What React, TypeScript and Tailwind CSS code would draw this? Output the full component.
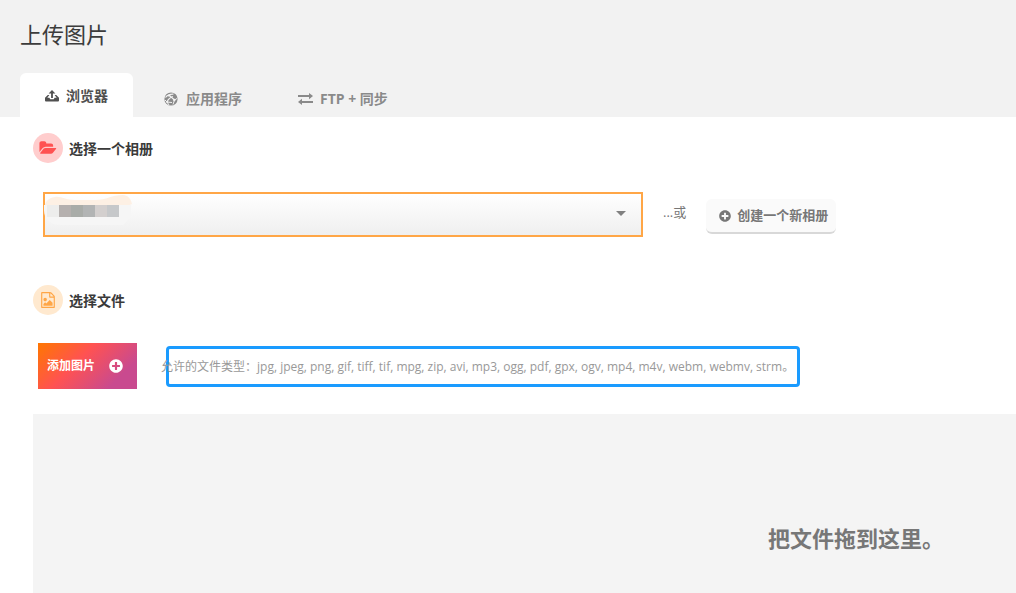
import type { ReactNode } from 'react';
import { FaPlusCircle } from 'react-icons/fa';

const fileTypes = [
    'jpg', 'jpeg', 'png', 'gif', 'tiff', 'tif', 'mpg', 'zip', 'avi', 'mp3',
    'ogg', 'pdf', 'gpx', 'ogv', 'mp4', 'm4v', 'webm', 'webmv', 'strm',
];

// blocks that hide the album name
const mosaic = [
    'bg-[#ededec]',
    'bg-[#b5b0ae]',
    'bg-[#a9aca8]',
    'bg-[#b2b4b4]',
    'bg-[#d3cfce]',
    'bg-[#c6c8ca]',
];

function UploadIcon() {
    return (
        <svg width="14" height="12" viewBox="0 0 14 12" fill="currentColor" aria-hidden="true">
            <path d="M7 0l3.400 3.600H7.900V8H6.100V3.600H3.600z" />
            <path d="M2.800 5h1.600L2.300 7.700h2.100l.8 1.600h3.600l.8-1.600h2.100L9.600 5h1.600L14 7.700v2.900c0 .6-.4.900-.9.900H.9c-.5 0-.9-.3-.9-.9V7.700z" />
        </svg>
    );
}

function NetworkIcon() {
    return (
        <svg width="14" height="14" viewBox="0 0 14 14" aria-hidden="true">
            <circle cx="7" cy="7" r="6.600" fill="currentColor" />
            <g fill="none" stroke="#f2f2f2">
                <path strokeWidth="1.200" d="M1.500 5.500C3 3.500 6 2 9.500 2.200M5.500 3.500l5 4.500M3 10c1-2.500 3-4.500 6-5.500" />
                <path strokeWidth="1" d="M10.500 8l2.500-1.500M10.500 8 9 12.500M3 10l5 .5M3 10l2 3M1 8l2 2" />
            </g>
            <g fill="#f2f2f2">
                <circle cx="5" cy="3.600" r="1.100" />
                <circle cx="10.300" cy="8" r="1.200" />
                <circle cx="3.200" cy="10" r="1.100" />
            </g>
        </svg>
    );
}

function ExchangeIcon() {
    return (
        <svg width="15" height="12" viewBox="0 0 15 12" fill="currentColor" aria-hidden="true">
            <path d="M0 8h11v2H0z" transform="translate(4 0)" />
            <path d="M4 5.800V12L0 8.900z" />
            <path d="M0 2h11v2H0z" />
            <path d="M11 0v6.200l4-3.100z" />
        </svg>
    );
}

function FolderIcon() {
    return (
        <svg width="18" height="16" viewBox="0 0 1920 1792" fill="currentColor" aria-hidden="true">
            <path d="M1879 952q0 31-31 66l-336 396q-43 51-120.500 86.500t-143.500 35.500h-1088q-34 0-60.500-13t-26.500-43q0-31 31-66l336-396q43-51 120.500-86.500t143.500-35.500h1088q34 0 60.500 13t26.500 43zm-343-344v160h-832q-94 0-197 47.500t-164 119.500l-337 396-5 6q0-4-.5-12.500t-.5-12.500v-960q0-92 66-158t158-66h320q92 0 158 66t66 158v32h544q92 0 158 66t66 158z" />
        </svg>
    );
}

function FileImageIcon() {
    return (
        <svg width="14" height="16" viewBox="0 0 1536 1792" fill="currentColor" aria-hidden="true">
            <path d="M1468 380q28 28 48 76t20 88v1152q0 40-28 68t-68 28h-1344q-40 0-68-28t-28-68v-1600q0-40 28-68t68-28h896q40 0 88 20t76 48zm-444-244v376h376q-10-29-22-41l-313-313q-12-12-41-22zm384 1528v-1024h-416q-40 0-68-28t-28-68v-416h-768v1536h1280zm-128-448v320h-1024v-192l192-192 128 128 384-384zm-832-192q-80 0-136-56t-56-136 56-136 136-56 136 56 56 136-56 136-136 56z" />
        </svg>
    );
}

function SectionTitle({ icon, tone, children }: { icon: ReactNode; tone: string; children: ReactNode }) {
    return (
        <h2 className="flex items-center gap-1.5 text-sm font-bold text-[#3a3a3a]">
            <span className={`flex size-[30px] items-center justify-center rounded-full ${tone}`}>
                {icon}
            </span>
            <span className="pt-px">{children}</span>
        </h2>
    );
}

function App() {
    return (
        <div className="flex min-h-screen flex-col overflow-hidden bg-white font-['Open_Sans','Noto_Sans_CJK_SC',sans-serif] text-[#777]">
            <header className="bg-[#f2f2f2] px-5 pt-[18px]">
                <h1 className="text-[22px]/[32px] font-normal text-[#3c3c3c]">上传图片</h1>
                <nav className="mt-[23px] flex h-11 items-stretch text-sm font-bold text-[#8a8a8a]">
                    <a href="#browser" className="flex items-center gap-[7px] rounded-t-md bg-white px-[25px] pt-0.5 text-[#505050]">
                        <UploadIcon />
                        浏览器
                    </a>
                    <a href="#apps" className="ml-[31px] flex items-center gap-2 pt-2">
                        <NetworkIcon />
                        应用程序
                    </a>
                    <a href="#ftp" className="ml-14 flex items-center gap-[7px] pt-2">
                        <ExchangeIcon />
                        FTP + 同步
                    </a>
                </nav>
            </header>

            <main className="flex flex-1 flex-col pt-4 pl-[33px]">
                <SectionTitle tone="bg-[#ffcdcd] text-[#ff5252]" icon={<FolderIcon />}>
                    选择一个相册
                </SectionTitle>
                <div className="mt-[29px] flex items-start pl-2.5">
                    <div className="relative w-[600px]">
                        <select
                            aria-label="选择一个相册"
                            className="block h-[45px] w-full appearance-none border-2 border-[#ffa646] bg-linear-to-b from-white to-[#efefef] px-3"
                        />
                        <svg
                            className="pointer-events-none absolute top-[2px] left-0"
                            width="92"
                            height="36"
                            viewBox="0 0 92 36"
                            aria-hidden="true"
                        >
                            <path d="M1 17C1 8 5 4 12 3c6-1 10 3 20 3h20c12 0 16-5 28-5 5 0 8 4 9 9L84 12H4z" fill="#fdf0e4" />
                            <path d="M1 11h87v12l-8 8h-62C7 31 1 25 1 16z" fill="#f6f6f6" />
                        </svg>
                        <span className="pointer-events-none absolute top-[13px] left-1 flex">
                            {mosaic.map((shade) => (
                                <span key={shade} className={`h-3 w-3 ${shade}`} />
                            ))}
                        </span>
                        <span className="pointer-events-none absolute top-[19px] right-[17px] border-x-5 border-t-5 border-x-transparent border-t-[#808080]" />
                    </div>
                    <span className="ml-5 pt-2.5 text-[13px]/[20px]">...或</span>
                    <button
                        type="button"
                        className="mt-[7px] ml-5 flex h-[35px] items-center gap-1.5 rounded-md border-b-2 border-[#d8d8d8] bg-[#fafafa] pr-2 pl-[13px] text-[13px] font-bold"
                    >
                        <FaPlusCircle size={12} />
                        创建一个新相册
                    </button>
                </div>

                <div className="mt-12">
                    <SectionTitle tone="bg-[#ffe9cf] text-[#ffa646]" icon={<FileImageIcon />}>
                        选择文件
                    </SectionTitle>
                </div>
                <div className="mt-7 flex items-center pl-[5px]">
                    <button
                        type="button"
                        className="flex h-[46px] w-[99px] shrink-0 items-center gap-3.5 bg-linear-[135deg,#ff7700_0%,#ff5252_40%,#c94a8f_80%] pl-[9px] text-xs font-bold text-white"
                    >
                        添加图片
                        <FaPlusCircle size={14} />
                    </button>
                    <div className="ml-[29px] h-[41px] w-[634px] rounded border-3 border-[#1a9bff]">
                        <p className="-ml-2 text-xs/[35px] whitespace-nowrap text-[#999]">
                            允许的文件类型：{fileTypes.join(', ')}。
                        </p>
                    </div>
                </div>

                <div className="mt-[25px] flex min-h-[179px] flex-1 items-start justify-end bg-[#f4f4f4] pt-[108px] pr-[72px]">
                    <p className="text-[22px]/[32px] font-bold">把文件拖到这里。</p>
                </div>
            </main>
        </div>
    );
}

export default App;
